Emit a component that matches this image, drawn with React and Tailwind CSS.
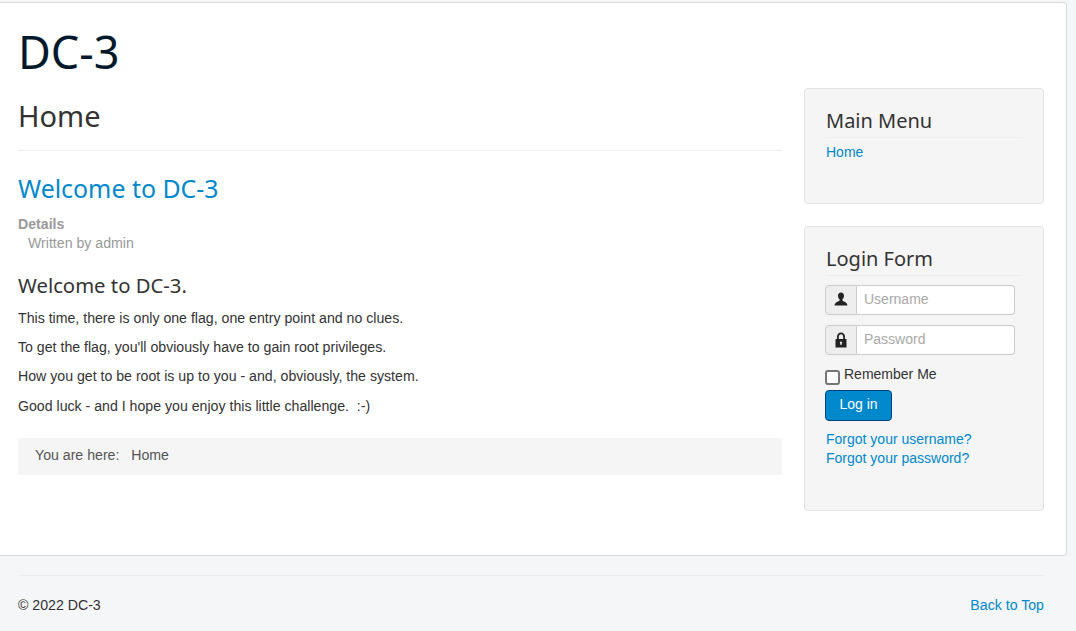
import React from 'react';

const heading = "font-['Noto_Sans',sans-serif]";

function Panel({ title, className, children }) {
  return (
    <div className={`border border-[#e3e3e3] rounded-[4px] bg-[#f5f5f5] px-[21px] pt-[19px] ${className}`}>
      <h3 className={`${heading} text-[20px] leading-[26px] font-[450] text-[#333] pb-[3px] border-b border-[#eeeeee]`}>{title}</h3>
      {children}
    </div>
  );
}

function Field({ icon, placeholder, type }) {
  return (
    <div className="flex w-[190px] h-[30px] mb-[10px] -ml-px">
      <span className="w-[32px] flex items-center justify-center bg-[#eeeeee] border border-[#cccccc] rounded-l-[4px] text-[#222]">{icon}</span>
      <input
        type={type}
        placeholder={placeholder}
        className="w-[158px] border border-l-0 border-[#cccccc] rounded-r-[4px] bg-white px-[7px] pb-[2px] text-[14px] placeholder:text-[#a9a9a9] outline-none"
      />
    </div>
  );
}

function UserIcon() {
  return (
    <svg width="14" height="14" viewBox="0 0 14 14" fill="currentColor" className="-mt-[2px] -ml-px">
      <path d="M7 .500C5.100.500 4 1.900 4 3.700c0 1.500.6 2.900 1.600 3.600v1.200C5 9.400.900 9.900.500 13.500h13c-.4-3.600-4.500-4.100-5.100-5V7.300C9.400 6.600 10 5.200 10 3.700 10 1.900 8.900.500 7 .500z" />
    </svg>
  );
}

function LockIcon() {
  return (
    <svg width="14" height="16" viewBox="0 0 14 16" fill="currentColor" className="-ml-px -mt-px">
      <path fillRule="evenodd" d="M3 7V4.500C3 2.300 4.800.500 7 .500s4 1.800 4 4V7h1.500v8.500h-11V7H3zm1.800 0h4.400V4.500C9.200 3.200 8.200 2.200 7 2.200S4.800 3.200 4.800 4.500V7zM7 9.500a1.200 1.200 0 0 0-.6 2.200V13h1.200v-1.300A1.200 1.200 0 0 0 7 9.500z" />
    </svg>
  );
}

export default function App() {
  return (
    <div className="min-h-[631px] bg-[#f4f6f7] pt-[2px] font-['Liberation_Sans',Arial,sans-serif] text-[14px] text-[#333] overflow-hidden">
      <div className="w-[1067px] h-[554px] bg-white border border-l-0 border-[#d9d9d9] rounded-r-[4px] pl-[18px] pr-[22px]">
        <h1 className={`${heading} text-[45px] leading-[60px] text-[#04192b] pt-[19px]`}>DC-3</h1>

        <div className="flex gap-[22px] mt-[6px]">
          <main className="w-[764px] text-[14.15px]">
            <div className="border-b border-[#eeeeee] h-[55px]">
              <h2 className={`${heading} text-[29px] leading-[40px] text-[#333] mt-[8px]`}>Home</h2>
            </div>
            <h2 className={`${heading} text-[24.9px] leading-[30px] text-[#0088cc] mt-[22px]`}>Welcome to DC-3</h2>
            <div className="text-[#999999] leading-[19px] mt-[12px]">
              <div className="font-bold">Details</div>
              <div className="pl-[10px]">Written by admin</div>
            </div>
            <h3 className={`${heading} text-[20.3px] leading-[26px] font-[450] text-[#333] mt-[19px]`}>Welcome to DC-3.</h3>
            <div className="mt-[11px] space-y-[11.2px] leading-[18px] text-[#333]">
              <p>This time, there is only one flag, one entry point and no clues.</p>
              <p>To get the flag, you'll obviously have to gain root privileges.</p>
              <p>How you get to be root is up to you - and, obviously, the system.</p>
              <p className="whitespace-pre">Good luck - and I hope you enjoy this little challenge.  :-)</p>
            </div>
            <div className="mt-[23px] h-[37px] rounded-[4px] bg-[#f5f5f5] pl-[17px] pt-[7px] leading-[20px] text-[#555] whitespace-pre">
              You are here:   Home
            </div>
          </main>

          <aside className="w-[240px]">
            <Panel title="Main Menu" className="h-[116px]">
              <a href="#" className="block mt-[4px] leading-[20px] text-[#0088cc]">Home</a>
            </Panel>
            <Panel title="Login Form" className="h-[285px] mt-[22px]">
              <div className="mt-[9px]">
                <Field icon={<UserIcon />} placeholder="Username" type="text" />
                <Field icon={<LockIcon />} placeholder="Password" type="password" />
              </div>
              <label className="flex items-start h-[25px] -ml-px">
                <input type="checkbox" className="appearance-none w-[15px] h-[15px] mt-[5px] mr-[4px] bg-white border-2 border-[#767676] rounded-[3px]" />
                <span className="leading-[18px]">Remember Me</span>
              </label>
              <button className="block -ml-px w-[67px] h-[31px] pb-[2px] rounded-[4px] bg-[#0088cc] border border-[#00437f] text-white text-[14px]">Log in</button>
              <div className="mt-[9px] leading-[19px] text-[#0088cc]">
                <a href="#" className="block">Forgot your username?</a>
                <a href="#" className="block">Forgot your password?</a>
              </div>
            </Panel>
          </aside>
        </div>
      </div>

      <footer className="mx-[18px] w-[1026px] mt-[19px] border-t border-[#eeeeee] pt-[20px] flex justify-between leading-[19px] text-[14.15px]">
        <span>© 2022 DC-3</span>
        <a href="#" className="text-[#0088cc]">Back to Top</a>
      </footer>
    </div>
  );
}
